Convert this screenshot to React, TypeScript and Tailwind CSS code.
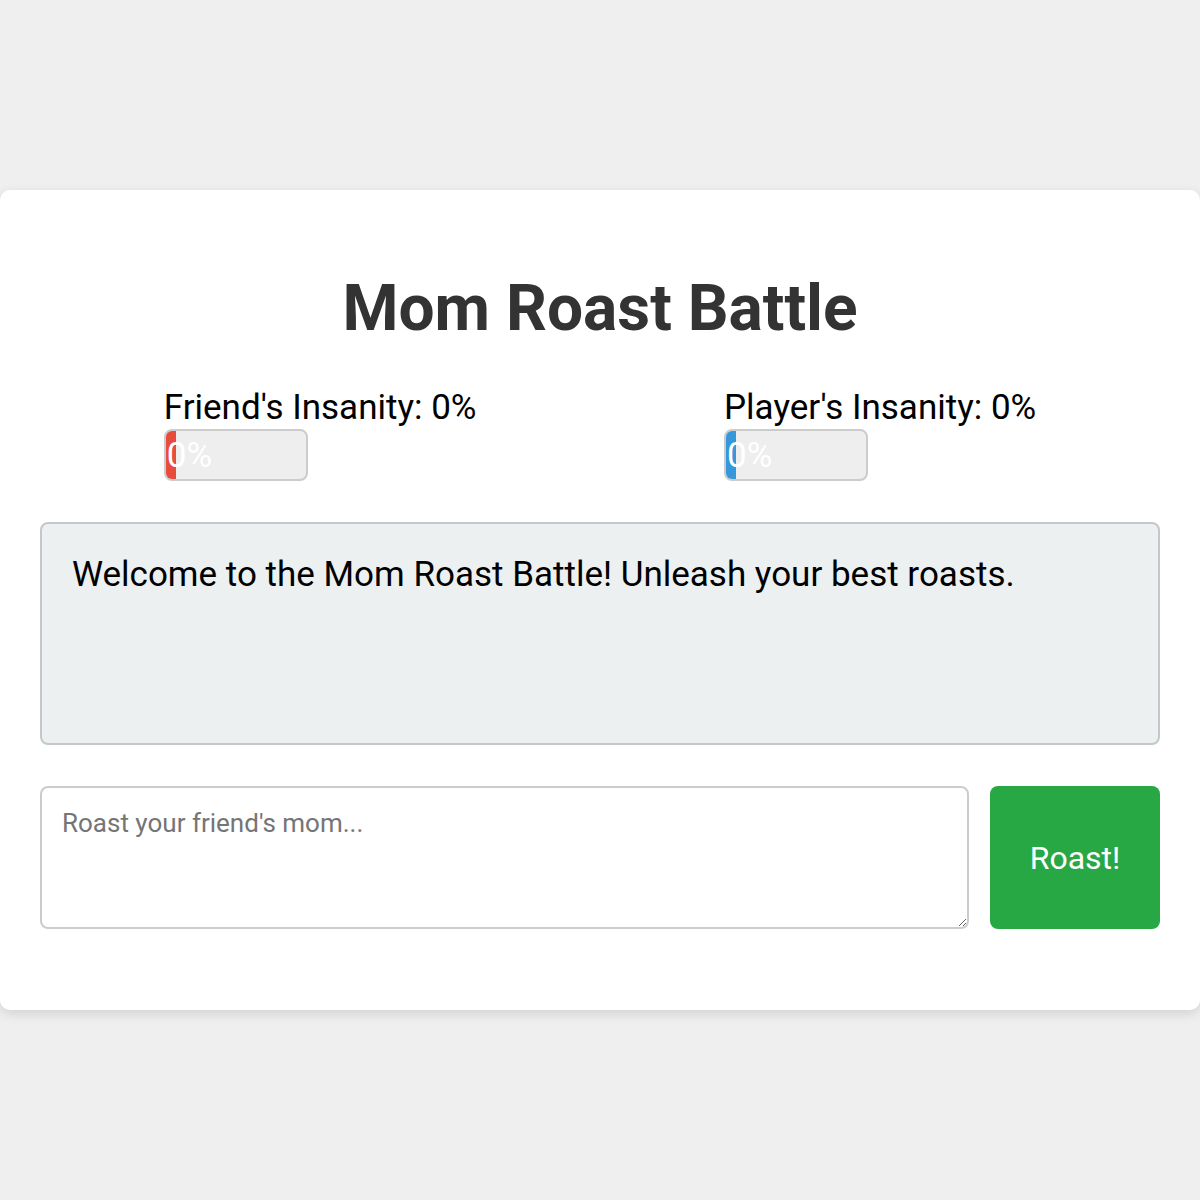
import { useState } from 'react'

function InsanityMeter({ label, value, color }: { label: string; value: number; color: string }) {
  return (
    <div className="flex flex-col items-start">
      <div className="text-[35px] leading-[42px] text-black">
        {label}: {value}%
      </div>
      <div className="relative w-[144px] h-[52px] rounded-[8px] border-2 border-[#cccccc] bg-[#eeeeee] overflow-hidden">
        <div className={`absolute left-0 top-0 h-full min-w-[10px] ${color}`} style={{ width: `${value}%` }} />
        <span className="absolute left-[1px] top-0 h-full flex items-center text-[35px] leading-none text-white whitespace-nowrap">
          {value}%
        </span>
      </div>
    </div>
  )
}

export default function App() {
  const [roast, setRoast] = useState('')

  return (
    <div className="min-h-screen bg-[#efefef] flex items-center justify-center font-['Roboto',sans-serif]">
      <div className="w-full bg-white rounded-[10px] p-[40px] shadow-[0_4px_12px_rgba(0,0,0,0.12)]">
        <h1 className="my-[41px] text-center text-[64px] leading-[75px] font-bold text-[#333333]">
          Mom Roast Battle
        </h1>

        <div className="flex justify-around">
          <InsanityMeter label="Friend's Insanity" value={0} color="bg-[#e74c3c]" />
          <InsanityMeter label="Player's Insanity" value={0} color="bg-[#3498db]" />
        </div>

        <div className="mt-[41px] h-[223px] rounded-[8px] border-2 border-[#c4c8ca] bg-[#ecf0f1] px-[30px] pt-[30px]">
          <p className="text-[35px] leading-[41px] text-black">
            Welcome to the Mom Roast Battle! Unleash your best roasts.
          </p>
        </div>

        <div className="mt-[41px] flex gap-[21px]">
          <textarea
            value={roast}
            onChange={(e) => setRoast(e.target.value)}
            placeholder="Roast your friend's mom..."
            className="flex-1 h-[143px] rounded-[8px] border-2 border-[#cccccc] p-[20px] text-[26px] leading-[30px] text-black placeholder:text-[#757575] outline-none"
          />
          <button className="w-[170px] h-[143px] rounded-[8px] bg-[#28a745] text-white text-[32px]">
            Roast!
          </button>
        </div>

        <div className="h-[41px]" />
      </div>
    </div>
  )
}
